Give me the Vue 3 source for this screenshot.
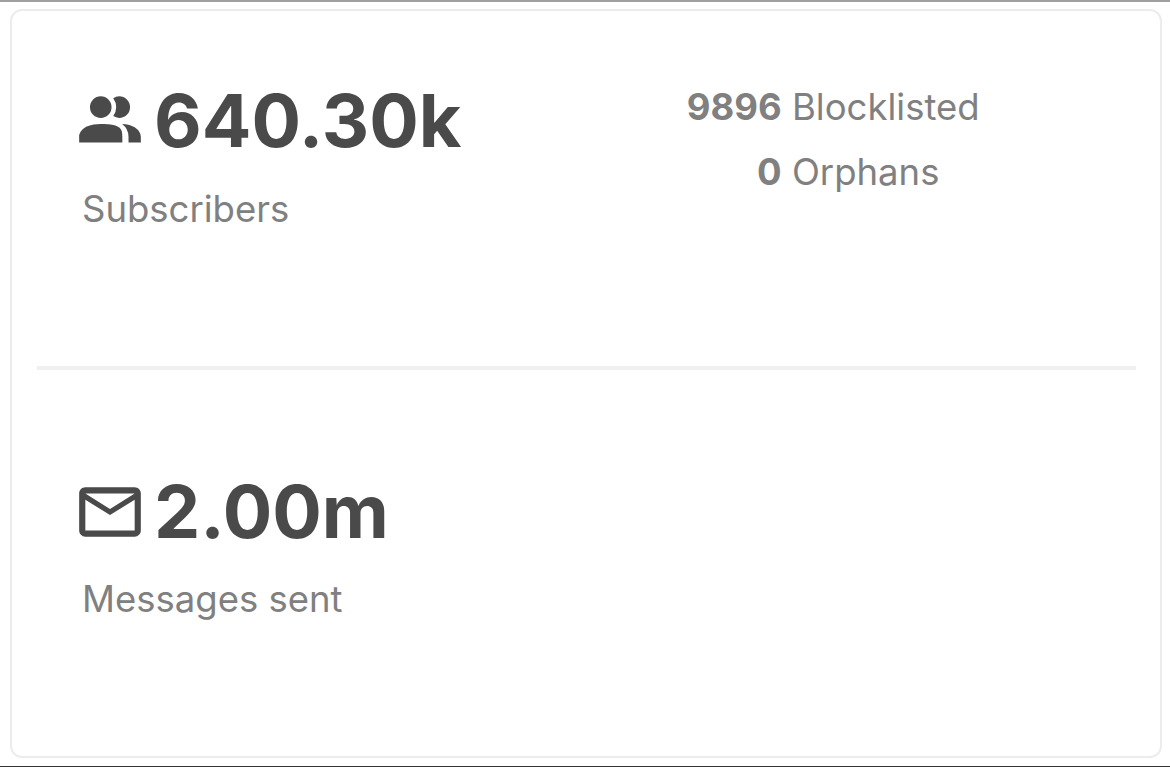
<script setup>
const stats = [
  { num: '9896', label: 'Blocklisted' },
  { num: '0', label: 'Orphans' },
]
</script>

<template>
  <div class="page">
    <section class="card">
      <div class="row top">
        <div class="main">
          <div class="value">
            <svg class="icon" viewBox="0 0 24 24" aria-hidden="true">
              <path d="M16 17V19H2V17S2 13 9 13 16 15 16 17M12.5 7.5A3.5 3.5 0 1 0 9 11A3.5 3.5 0 0 0 12.5 7.5M15.94 13A5.32 5.32 0 0 1 18 17V19H22V17S22 13.37 15.94 13M15 4A3.39 3.39 0 0 0 13.07 4.59A5 5 0 0 1 13.07 10.41A3.39 3.39 0 0 0 15 11A3.5 3.5 0 0 0 15 4Z" />
            </svg>
            <span>640.30k</span>
          </div>
          <p class="label">Subscribers</p>
        </div>
        <ul class="side">
          <li v-for="s in stats" :key="s.label"><strong>{{ s.num }}</strong> {{ s.label }}</li>
        </ul>
      </div>
      <hr class="rule" />
      <div class="row bottom">
        <div class="main">
          <div class="value">
            <svg class="icon" viewBox="0 0 24 24" aria-hidden="true">
              <path d="M22 6C22 4.9 21.1 4 20 4H4C2.9 4 2 4.9 2 6V18C2 19.1 2.9 20 4 20H20C21.1 20 22 19.1 22 18V6M20 6L12 11L4 6H20M20 18H4V8L12 13L20 8V18Z" />
            </svg>
            <span>2.00m</span>
          </div>
          <p class="label">Messages sent</p>
        </div>
      </div>
    </section>
  </div>
</template>

<style>
html, body { margin: 0; background: #fff; }
</style>

<style scoped>
.page {
  box-sizing: border-box;
  width: 1170px;
  height: 767px;
  padding: 7px 8px 8px 10px;
  background: #fff;
  border-top: 2px solid #a0a0a0;
  border-bottom: 1px solid #333;
  font-family: Inter, "Liberation Sans", sans-serif;
}
.card {
  box-sizing: border-box;
  height: 100%;
  padding: 0 24px 0 25px;
  border: 2px solid #ececec;
  border-radius: 12px;
  display: flex;
  flex-direction: column;
}
.row { display: grid; grid-template-columns: 1fr 1fr; }
.top { height: 355px; padding-top: 72px; box-sizing: border-box; }
.main { padding-left: 45px; }
.value {
  display: flex;
  align-items: center;
  height: 76px;
  font-size: 73.5px;
  font-weight: 700;
  line-height: 76px;
  color: #4a4a4a;
  margin-left: -9px;
}
.icon { width: 74px; height: 74px; fill: #4a4a4a; flex: none; margin-right: 7px; }
.label {
  margin: 28px 0 0;
  font-size: 36.5px;
  line-height: 44px;
  color: #808080;
}
.bottom .label { margin-top: 27px; }
.side {
  list-style: none;
  margin: -8px 0 0;
  padding: 0 56px 0 0;
  text-align: center;
  font-size: 36.5px;
  line-height: 65px;
  color: #808080;
}
.side li:last-child { padding-left: 30px; }
.side strong { font-weight: 700; }
.rule {
  margin: 0;
  height: 4px;
  border: 0;
  background: #f0f0f0;
  flex: none;
}
.bottom { padding-top: 104px; }
</style>
